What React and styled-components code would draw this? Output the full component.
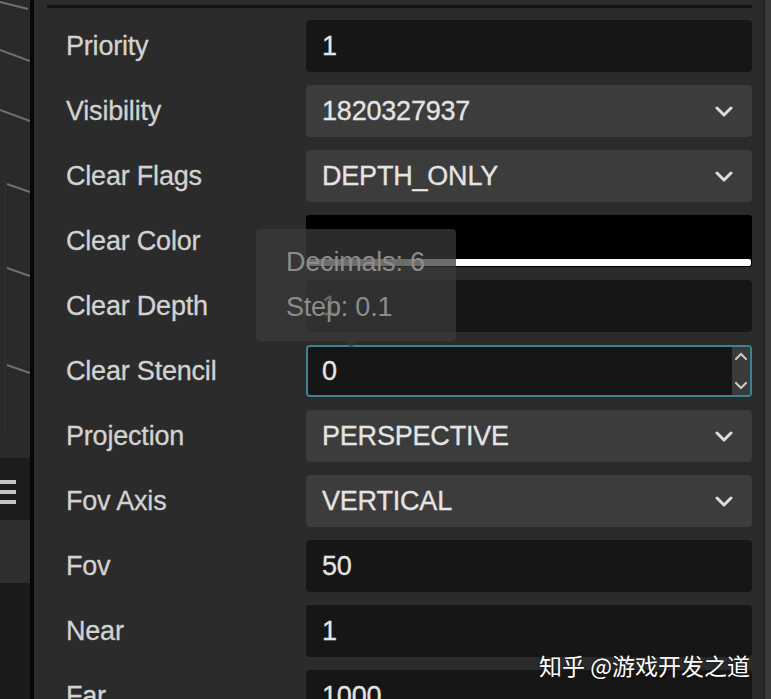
import React from "react";
import styled, { createGlobalStyle } from "styled-components";

const Global = createGlobalStyle`
  html, body { margin: 0; padding: 0; background: #2b2b2b; overflow: hidden; }
  * { box-sizing: border-box; }
`;

const Page = styled.div`
  display: flex;
  width: 771px;
  height: 699px;
  font-family: "Liberation Sans", Arial, sans-serif;
  overflow: hidden;
`;

const LeftStrip = styled.div`
  width: 30px;
  display: flex;
  flex-direction: column;
  flex-shrink: 0;
`;

const Viewport = styled.div`
  height: 458px;
  background: #2a2a2a;
  position: relative;
  svg { display: block; }
`;

const Toolbar = styled.div`
  height: 62px;
  background: #1c1c1c;
  display: flex;
  align-items: center;
`;

const Hamburger = styled.div`
  display: flex;
  flex-direction: column;
  gap: 6px;
  margin-top: 6px;
  span { display: block; width: 16px; height: 4px; background: #c4c4c4; }
`;

const GreyBox = styled.div`
  height: 63px;
  background: #2e2e2e;
`;

const DarkArea = styled.div`
  flex: 1;
  background: #1b1b1b;
`;

const Divider = styled.div`
  width: 4px;
  background: #070707;
  flex-shrink: 0;
`;

const Panel = styled.div`
  flex: 1;
  background: #2b2b2b;
  position: relative;
  padding: 5px 11px 0 0;
`;

const TopRule = styled.div`
  height: 3px;
  margin-left: 13px;
  background: #121212;
`;

const Rows = styled.div`
  display: flex;
  flex-direction: column;
  gap: 13px;
  margin-top: 12px;
  padding-left: 32px;
`;

const Row = styled.div`
  display: grid;
  grid-template-columns: 240px 1fr;
  align-items: center;
  height: 52px;
`;

const Label = styled.div`
  color: #d2d2d2;
  font-size: 27px;
  letter-spacing: -0.2px;
  -webkit-text-stroke: 0.3px #d2d2d2;
`;

const Field = styled.div`
  height: 52px;
  border-radius: 4px;
  background: ${(p) => (p.$select ? "#3c3c3c" : "#161616")};
  border: ${(p) => (p.$focus ? "2px solid #3b8393" : "none")};
  display: flex;
  align-items: center;
  padding-left: ${(p) => (p.$focus ? "14px" : "16px")};
  color: #e4e4e4;
  font-size: 27px;
  letter-spacing: -0.2px;
  -webkit-text-stroke: 0.3px #e4e4e4;
  position: relative;
  overflow: hidden;
`;

const Value = styled.span`
  flex: 1;
`;

const Chevron = styled.svg`
  width: 18px;
  height: 11px;
  margin-right: 19px;
`;

const Spinner = styled.div`
  width: 18px;
  align-self: stretch;
  background: #3a3a3a;
  display: flex;
  flex-direction: column;
  justify-content: space-between;
  align-items: center;
  padding: 5px 0;
`;

const Swatch = styled.div`
  height: 52px;
  border-radius: 3px;
  background: #000;
  display: flex;
  flex-direction: column;
  justify-content: flex-end;
  padding: 0 1px 1px 1px;
`;

const AlphaBar = styled.div`
  height: 7px;
  background: #ffffff;
  border-radius: 2px;
`;

const Tooltip = styled.div`
  position: absolute;
  left: 222px;
  top: 229px;
  width: 200px;
  height: 112px;
  background: rgba(58, 58, 58, 0.74);
  border-radius: 4px;
  padding: 11px 0 0 30px;
  color: #8c8c8c;
  font-size: 27px;
  letter-spacing: -0.2px;
  line-height: 45px;
  &::after {
    content: "";
    position: absolute;
    left: 88px;
    bottom: -7px;
    border-left: 7px solid transparent;
    border-right: 7px solid transparent;
    border-top: 7px solid rgba(58, 58, 58, 0.6);
  }
`;

const TipLine = styled.div``;

const RightEdge = styled.div`
  width: 8px;
  flex-shrink: 0;
  background: #3a3a3a;
  border-left: 2px solid #242424;
`;

const Watermark = styled.div`
  position: absolute;
  right: 13px;
  bottom: 17px;
  color: #ffffff;
  font-family: "Noto Sans CJK SC", "Noto Sans", sans-serif;
  font-size: 23px;
  text-shadow: 0 0 3px rgba(0, 0, 0, 0.6);
  white-space: nowrap;
`;

const ChevronIcon = () => (
  <Chevron viewBox="0 0 18 11">
    <path d="M2 2 L9 9 L16 2" fill="none" stroke="#dcdcdc" strokeWidth="3" strokeLinecap="round" strokeLinejoin="round" />
  </Chevron>
);

const SmallChevron = ({ up }) => (
  <svg width="14" height="9" viewBox="0 0 14 9">
    <path d={up ? "M2 7 L7 2 L12 7" : "M2 2 L7 7 L12 2"} fill="none" stroke="#c8c8c8" strokeWidth="2.2" strokeLinecap="round" />
  </svg>
);

const rows = [
  { label: "Priority", value: "1" },
  { label: "Visibility", value: "1820327937", select: true },
  { label: "Clear Flags", value: "DEPTH_ONLY", select: true },
  { label: "Clear Color", color: true },
  { label: "Clear Depth", value: "1" },
  { label: "Clear Stencil", value: "0", focus: true },
  { label: "Projection", value: "PERSPECTIVE", select: true },
  { label: "Fov Axis", value: "VERTICAL", select: true },
  { label: "Fov", value: "50" },
  { label: "Near", value: "1" },
  { label: "Far", value: "1000" },
];

const gridLines = [
  [0, 2, 28, 9],
  [0, 50, 30, 61],
  [0, 110, 30, 121],
  [7, 184, 30, 192],
  [7, 268, 30, 276],
  [7, 365, 30, 373],
];

export default function App() {
  return (
    <Page>
      <Global />
      <LeftStrip>
        <Viewport>
          <svg width="30" height="458">
            {gridLines.map(([x1, y1, x2, y2], i) => (
              <line key={i} x1={x1} y1={y1} x2={x2} y2={y2} stroke="#707070" strokeWidth="2" />
            ))}
            <line x1="5" y1="180" x2="5" y2="437" stroke="#333" strokeWidth="1" />
          </svg>
        </Viewport>
        <Toolbar>
          <Hamburger>
            <span />
            <span />
            <span />
          </Hamburger>
        </Toolbar>
        <GreyBox />
        <DarkArea />
      </LeftStrip>
      <Divider />
      <Panel>
        <TopRule />
        <Rows>
          {rows.map((r) => (
            <Row key={r.label}>
              <Label>{r.label}</Label>
              {r.color ? (
                <Swatch>
                  <AlphaBar />
                </Swatch>
              ) : (
                <Field $select={r.select} $focus={r.focus}>
                  <Value>{r.value}</Value>
                  {r.select && <ChevronIcon />}
                  {r.focus && (
                    <Spinner>
                      <SmallChevron up />
                      <SmallChevron />
                    </Spinner>
                  )}
                </Field>
              )}
            </Row>
          ))}
        </Rows>
        <Tooltip>
          <TipLine>Decimals: 6</TipLine>
          <TipLine>Step: 0.1</TipLine>
        </Tooltip>
        <Watermark>知乎 @游戏开发之道</Watermark>
      </Panel>
      <RightEdge />
    </Page>
  );
}
